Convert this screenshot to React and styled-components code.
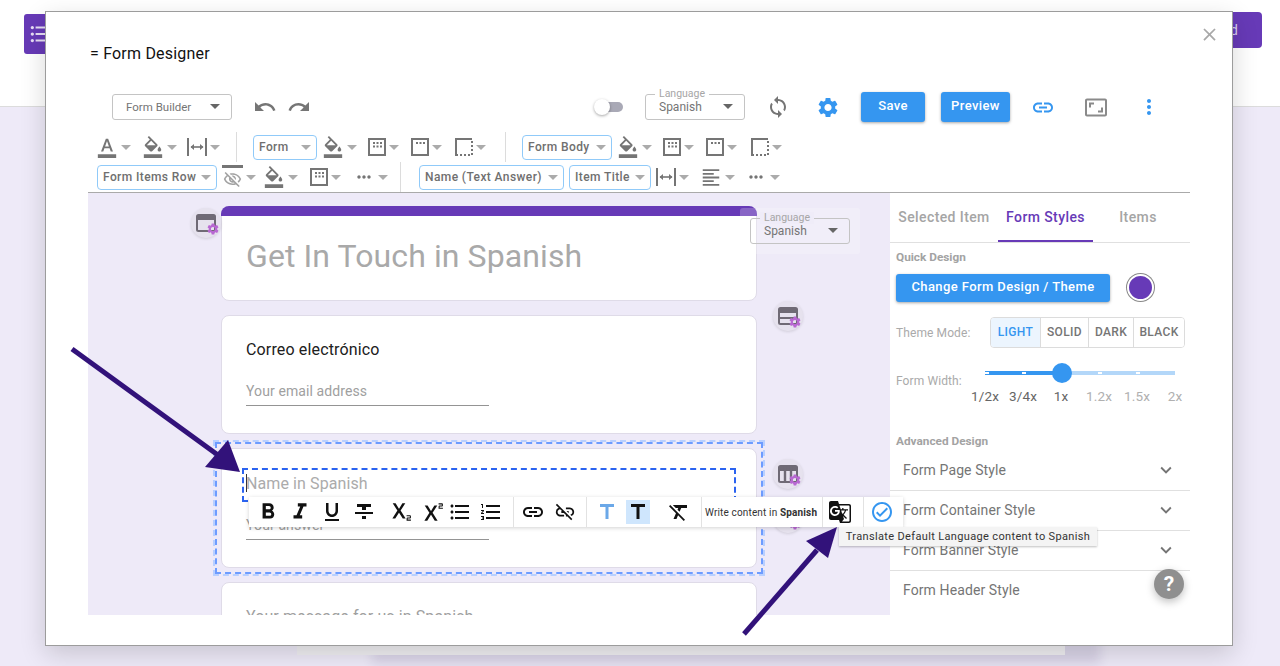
import React from "react"
import styled, { createGlobalStyle } from "styled-components"
import {
    MdFormatColorText,
    MdFormatColorFill,
    MdUndo,
    MdRedo,
    MdSync,
    MdSettings,
    MdLink,
    MdLinkOff,
    MdAspectRatio,
    MdMoreVert,
    MdMoreHoriz,
    MdFormatAlignLeft,
    MdOutlineVisibilityOff,
    MdFormatBold,
    MdFormatItalic,
    MdFormatUnderlined,
    MdFormatStrikethrough,
    MdSubscript,
    MdSuperscript,
    MdFormatListBulleted,
    MdFormatListNumbered,
    MdTitle,
    MdFormatClear,
    MdGTranslate,
    MdOutlineCheckCircle,
    MdExpandMore,
    MdClose,
} from "react-icons/md"

const GlobalStyle = createGlobalStyle`
    html, body {
        margin: 0;
        height: 100%;
        overflow: hidden;
        background: #eeeaf8;
        font-family: Roboto, "Liberation Sans", sans-serif;
    }
`

const Page = styled.div`
    position: relative;
    width: 1280px;
    height: 666px;
    overflow: hidden;
`

const PageHeader = styled.header`
    display: flex;
    justify-content: space-between;
    align-items: flex-start;
    height: 107px;
    padding: 12px 18px 0 24px;
    box-sizing: border-box;
    background: #fff;
    border-bottom: 1px solid #dcdcdc;
`

const Logo = styled.div`
    display: flex;
    align-items: center;
    width: 40px;
    height: 40px;
    margin-top: 2px;
    padding-left: 4px;
    box-sizing: border-box;
    border-radius: 3px;
    background: #673ab7;
    color: #e8dff5;
    font-size: 26px;
`

const SendButton = styled.div`
    width: 90px;
    height: 36px;
    padding-right: 24px;
    box-sizing: border-box;
    border-radius: 4px;
    background: #673ab7;
    color: #d9cdf0;
    font-size: 14px;
    line-height: 36px;
    text-align: right;
`

const PageSheet = styled.div`
    width: 768px;
    height: 548px;
    margin-left: 297px;
    background: #f1f0f3;
    box-shadow: 55px 30px 10px -20px rgba(60, 40, 110, 0.1);
`

const Modal = styled.div`
    position: absolute;
    left: 45px;
    top: 11px;
    width: 1188px;
    height: 635px;
    box-sizing: border-box;
    padding: 0 42px;
    background: #fff;
    border: 1px solid #9c9c9c;
    box-shadow: 0 8px 24px rgba(0, 0, 0, 0.16);
`

const CloseButton = styled.div`
    position: absolute;
    right: 12px;
    top: 12px;
    color: #a8a8a8;
    font-size: 21px;
    line-height: 0;
`

const TitleBar = styled.div`
    height: 30px;
    margin-top: 27px;
    padding-left: 2px;
    color: #111;
    font-size: 16px;
    letter-spacing: 0.2px;
    line-height: 30px;
`

const TopBar = styled.div`
    display: flex;
    align-items: center;
    height: 30px;
    margin-top: 23px;
    padding-left: 24px;
`

const OutlineSelect = styled.div`
    position: relative;
    display: flex;
    align-items: center;
    justify-content: space-between;
    box-sizing: border-box;
    width: ${(p) => p.$width}px;
    height: 26px;
    margin-left: ${(p) => p.$ml || 0}px;
    padding: 0 11px 1px 13px;
    border: 1px solid #c4c4c4;
    border-radius: 3px;
    color: #757575;
    font-size: ${(p) => p.$font || 11.5}px;
`

const FieldLegend = styled.span`
    position: absolute;
    left: 9px;
    top: -7px;
    padding: 0 4px;
    background: ${(p) => p.$bg || "#fff"};
    color: #a6a6a6;
    font-size: 10.5px;
    line-height: 12px;
`

const CaretDown = styled.span`
    flex: none;
    width: 0;
    height: 0;
    border-left: 5px solid transparent;
    border-right: 5px solid transparent;
    border-top: 5px solid ${(p) => p.$color || "#666"};
`

const IconSlot = styled.div`
    display: flex;
    align-items: center;
    justify-content: center;
    flex: none;
    margin-left: ${(p) => p.$ml || 0}px;
    width: ${(p) => p.$w || 24}px;
    color: ${(p) => p.$color || "#757575"};
    font-size: ${(p) => p.$size || 24}px;
`

const Toggle = styled.div`
    position: relative;
    width: 28px;
    height: 10px;
    margin-left: ${(p) => p.$ml}px;
    border-radius: 5px;
    background: #a9a9b6;
`

const ToggleKnob = styled.span`
    position: absolute;
    left: -1px;
    top: -3px;
    width: 16px;
    height: 16px;
    border-radius: 50%;
    background: #fff;
    box-shadow: 0 1px 3px rgba(0, 0, 0, 0.35);
`

const PrimaryButton = styled.div`
    box-sizing: border-box;
    flex: none;
    width: ${(p) => p.$width}px;
    height: ${(p) => p.$height || 30}px;
    margin-left: ${(p) => p.$ml || 0}px;
    border-radius: 3px;
    background: #3596f0;
    box-shadow: 0 1px 3px rgba(0, 0, 0, 0.35);
    color: #fff;
    font-size: 13px;
    font-weight: 500;
    letter-spacing: 0.4px;
    line-height: ${(p) => (p.$height || 30) - 2}px;
    text-align: center;
`

const StyleRow = styled.div`
    display: flex;
    align-items: center;
    height: 30px;
    margin-top: ${(p) => p.$mt || 0}px;
    padding-left: ${(p) => p.$pl}px;
`

const ToolGroup = styled.div`
    display: flex;
    align-items: center;
    gap: 3px;
    flex: none;
    margin-left: ${(p) => p.$ml || 0}px;
`

const RowDivider = styled.div`
    flex: none;
    width: 1px;
    height: 30px;
    margin-left: ${(p) => p.$ml}px;
    background: #dcdcdc;
`

const StyleSelect = styled.div`
    display: flex;
    align-items: center;
    justify-content: space-between;
    flex: none;
    box-sizing: border-box;
    width: ${(p) => p.$width}px;
    height: 25px;
    margin-left: ${(p) => p.$ml || 0}px;
    padding: 0 5px;
    border: 1px solid #90caf9;
    border-radius: 4px;
    color: #6f6f6f;
    font-size: 12px;
    font-weight: 500;
    letter-spacing: 0.4px;
    white-space: nowrap;
`

const EyeStack = styled.div`
    display: flex;
    flex-direction: column;
    align-items: center;
    width: 21px;
    color: #a2a2a2;
    font-size: 19px;
    line-height: 0;
`

const EyeBar = styled.span`
    width: 21px;
    height: 3px;
    margin-bottom: 2px;
    background: #757575;
`

const Body = styled.div`
    display: flex;
    height: 422px;
    overflow: hidden;
    border-top: 1px solid #aaa;
`

const Canvas = styled.div`
    position: relative;
    z-index: 2;
    flex: none;
    width: 802px;
    box-sizing: border-box;
    padding-top: 13px;
    background: #eeeaf8;
`

const Card = styled.div`
    position: relative;
    box-sizing: border-box;
    width: 536px;
    height: ${(p) => p.$height}px;
    margin: 0 auto 14px;
    padding: ${(p) => p.$pad || "0 24px"};
    border: 1px solid #dfdbe8;
    border-radius: 8px;
    background: #fff;
`

const CardBanner = styled.div`
    height: 10px;
    margin: -1px -25px 0;
    border-radius: 8px 8px 0 0;
    background: #673ab7;
`

const CardTitle = styled.div`
    margin-top: 21px;
    color: #a9a9a9;
    font-size: 32px;
    line-height: 38px;
    letter-spacing: 0.1px;
`

const Question = styled.div`
    color: #202020;
    font-size: 16px;
    letter-spacing: 0.15px;
    line-height: 18px;
`

const AnswerLine = styled.div`
    width: 243px;
    height: 22px;
    margin-top: ${(p) => p.$mt || 0}px;
    border-bottom: 1px solid #949494;
    color: #a0a0a0;
    font-size: ${(p) => p.$font || 14}px;
    letter-spacing: 0.1px;
    line-height: 17px;
    white-space: nowrap;
`

const SelectionFrame = styled.div`
    position: absolute;
    inset: -7px;
    border: 2px dashed #6d9cff;
    outline: 2px dashed #b9d0ff;
    pointer-events: none;
`

const EditingBox = styled.div`
    position: absolute;
    left: 20px;
    top: 19px;
    width: 494px;
    height: 34px;
    box-sizing: border-box;
    padding: 4px 0 0 2px;
    border: 2px dashed #2b63f0;
    color: #ababab;
    font-size: 16px;
    letter-spacing: 0.1px;
    line-height: 19px;
`

const TextCaret = styled.span`
    display: inline-block;
    width: 1px;
    height: 18px;
    margin-right: -1px;
    background: #333;
    vertical-align: -3px;
`

const FloatingButton = styled.div`
    position: absolute;
    top: ${(p) => p.$top}px;
    ${(p) => (p.$left ? `left: ${p.$left}px;` : "right: -47px;")}
    display: flex;
    align-items: center;
    justify-content: center;
    width: 30px;
    height: 30px;
    border-radius: 50%;
    background: #e6e2ee;
    box-shadow: 0 1px 3px rgba(0, 0, 0, 0.12);
`

const GearBadge = styled.span`
    position: absolute;
    right: 1px;
    bottom: 2px;
    color: #b868d2;
    font-size: 14px;
    line-height: 0;
`

const LanguageOverlay = styled.div`
    position: absolute;
    left: 652px;
    top: 15px;
    width: 100px;
    padding: 10px;
    border-radius: 3px;
    background: rgba(255, 255, 255, 0.22);
`

const EditorToolbar = styled.div`
    position: absolute;
    left: 27px;
    top: 48px;
    z-index: 3;
    display: flex;
    align-items: center;
    height: 30px;
    padding-left: 3px;
    background: #fff;
    box-shadow: 0 1px 4px rgba(0, 0, 0, 0.18);
`

const ToolbarIcon = styled.div`
    display: flex;
    align-items: center;
    justify-content: center;
    flex: none;
    box-sizing: border-box;
    width: ${(p) => p.$w || 32}px;
    height: 24px;
    margin-left: ${(p) => p.$ml || 0}px;
    padding-right: ${(p) => p.$pr || 0}px;
    background: ${(p) => (p.$active ? "#cfe6fd" : "transparent")};
    color: ${(p) => p.$color || "#111"};
    font-size: ${(p) => p.$size || 24}px;
`

const ToolbarDivider = styled.div`
    flex: none;
    width: 1px;
    height: 30px;
    margin: 0 ${(p) => p.$mx || 0}px;
    background: #e2e2e2;
`

const WriteNote = styled.div`
    flex: none;
    color: #333;
    font-size: 10px;
    letter-spacing: 0.15px;
    white-space: nowrap;
`

const Tooltip = styled.div`
    position: absolute;
    left: 590px;
    top: 30px;
    box-sizing: border-box;
    width: 258px;
    height: 19px;
    background: #f4f4f4;
    box-shadow: 0 1px 2px rgba(0, 0, 0, 0.25);
    color: #333;
    font-size: 11px;
    letter-spacing: 0.35px;
    line-height: 20px;
    text-align: center;
    white-space: nowrap;
`

const SidePanel = styled.aside`
    flex: none;
    width: 300px;
    position: relative;
    z-index: 1;
`

const TabBar = styled.div`
    display: flex;
    height: 49px;
    border-bottom: 1px solid #e0e0e0;
`

const Tab = styled.div`
    box-sizing: border-box;
    width: ${(p) => p.$width}px;
    height: 49px;
    border-bottom: 2px solid ${(p) => (p.$active ? "#673ab7" : "transparent")};
    color: ${(p) => (p.$active ? "#673ab7" : "#a5a5a5")};
    font-size: 14px;
    font-weight: 500;
    letter-spacing: 0.4px;
    line-height: 48px;
    text-align: center;
    white-space: nowrap;
`

const SectionLabel = styled.div`
    margin: ${(p) => p.$m};
    color: #a3a3a3;
    font-size: 11.8px;
    font-weight: 700;
    line-height: 14px;
`

const ThemeRow = styled.div`
    display: flex;
    align-items: center;
    margin-top: ${(p) => p.$mt}px;
    padding-left: 6px;
`

const ThemeSwatch = styled.span`
    flex: none;
    box-sizing: border-box;
    width: 27px;
    height: 27px;
    margin: -2px 0 0 17px;
    border: 2px solid #fff;
    border-radius: 50%;
    background: #673ab7;
    box-shadow: 0 0 0 1px #888;
`

const FieldLabel = styled.span`
    flex: none;
    width: 94px;
    color: #aaa;
    font-size: 12px;
    letter-spacing: 0.1px;
`

const ModeGroup = styled.div`
    display: flex;
    height: 29px;
    border: 1px solid #dcdcdc;
    border-radius: 4px;
    overflow: hidden;
`

const ModeButton = styled.div`
    box-sizing: border-box;
    width: ${(p) => p.$width}px;
    border-left: ${(p) => (p.$first ? "none" : "1px solid #dcdcdc")};
    background: ${(p) => (p.$active ? "#ecf5fe" : "#fff")};
    color: ${(p) => (p.$active ? "#3596f0" : "#757575")};
    font-size: 12px;
    font-weight: 500;
    letter-spacing: 0.35px;
    line-height: 28px;
    text-align: center;
`

const WidthSection = styled.div`
    position: relative;
    height: 56px;
    margin-top: 13px;
`

const WidthLabel = styled(FieldLabel)`
    position: absolute;
    left: 6px;
    top: 13px;
`

const SliderTrack = styled.div`
    position: absolute;
    left: 95px;
    top: 10px;
    width: 190px;
    height: 4px;
    background: #b3d7f9;
`

const SliderFill = styled.div`
    width: ${(p) => p.$pct}%;
    height: 100%;
    background: #3596f0;
`

const SliderDot = styled.span`
    position: absolute;
    left: ${(p) => p.$left}px;
    top: 1px;
    width: 4px;
    height: 2px;
    background: #fff;
`

const SliderThumb = styled.span`
    position: absolute;
    left: 67px;
    top: -8px;
    width: 20px;
    height: 20px;
    border-radius: 50%;
    background: #3596f0;
`

const Marks = styled.div`
    position: absolute;
    left: 76px;
    top: 28px;
    display: grid;
    grid-template-columns: repeat(6, 38px);
`

const Mark = styled.span`
    color: ${(p) => (p.$on ? "#666" : "#b0b0b0")};
    font-size: 13.5px;
    letter-spacing: 0.2px;
    line-height: 15px;
    text-align: center;
    white-space: nowrap;
`

const AccordionRow = styled.div`
    display: flex;
    align-items: center;
    justify-content: space-between;
    box-sizing: border-box;
    height: 40px;
    padding: 0 13px 2px;
    border-bottom: ${(p) => (p.$last ? "none" : "1px solid #e0e0e0")};
    color: #757575;
    font-size: 14px;
    letter-spacing: 0.1px;
`

const HelpButton = styled.div`
    position: absolute;
    right: 48px;
    bottom: 46px;
    z-index: 1;
    width: 30px;
    height: 30px;
    border-radius: 50%;
    background: #8f8f8f;
    box-shadow: 0 3px 8px rgba(0, 0, 0, 0.25);
    color: #fff;
    font-size: 21px;
    font-weight: 700;
    line-height: 30px;
    text-align: center;
`

const ArrowLayer = styled.svg`
    position: absolute;
    left: 0;
    top: 0;
    z-index: 5;
    pointer-events: none;
`

const Frame = ({ kind }) => (
    <svg width="18" height="18" viewBox="0 0 18 18" fill="none">
        {kind === "corner" ? (
            <>
                <path d="M1 18V1h16" stroke="#757575" strokeWidth="2" />
                <path d="M17 3v15M1 17h16" stroke="#757575" strokeWidth="2" strokeDasharray="2 2" />
            </>
        ) : (
            <>
                <rect x="1" y="1" width="16" height="16" stroke="#757575" strokeWidth="2" />
                <path d="M5 5h9" stroke="#757575" strokeWidth="2" strokeDasharray="2 1.5" />
                {kind === "all" && (
                    <path d="M5 8.5h9" stroke="#757575" strokeWidth="2" strokeDasharray="2 1.5" />
                )}
            </>
        )}
    </svg>
)

const WidthIcon = () => (
    <svg width="20" height="20" viewBox="0 0 20 20" fill="none">
        <path d="M1 1v18M19 1v18" stroke="#757575" strokeWidth="2" />
        <path d="M4 10h12" stroke="#757575" strokeWidth="1.6" />
        <path d="M7 7l-3.5 3L7 13zM13 7l3.5 3L13 13z" fill="#757575" />
    </svg>
)

const WindowIcon = ({ kind }) => (
    <svg width="20" height="18" viewBox="0 0 20 18" fill="none">
        <rect x="1" y="1" width="18" height="16" rx="1.5" stroke="#6f6a75" strokeWidth="2" />
        <rect x="1" y="1" width="18" height="5" fill="#6f6a75" />
        {kind === "split" && <path d="M1 11h18" stroke="#6f6a75" strokeWidth="2" />}
        {kind === "columns" && <path d="M7 1v16M13 1v16" stroke="#6f6a75" strokeWidth="2.4" />}
    </svg>
)

const Tool = ({ children, ml }) => (
    <ToolGroup $ml={ml}>
        {children}
        <CaretDown $color="#ababab" />
    </ToolGroup>
)

const StyleDropdown = ({ label, width, ml }) => (
    <StyleSelect $width={width} $ml={ml}>
        {label}
        <CaretDown $color="#ababab" />
    </StyleSelect>
)

const Fill = () => (
    <IconSlot $w={22} $size={24}>
        <MdFormatColorFill />
    </IconSlot>
)

const FloatingGear = ({ kind, top, left }) => (
    <FloatingButton $top={top} $left={left}>
        <WindowIcon kind={kind} />
        <GearBadge>
            <MdSettings />
        </GearBadge>
    </FloatingButton>
)

const marks = [
    ["1/2x", true],
    ["3/4x", true],
    ["1x", true],
    ["1.2x", false],
    ["1.5x", false],
    ["2x", false],
]

const App = () => {
    return (
        <Page>
            <GlobalStyle />
            <PageHeader>
                <Logo>
                    <MdFormatListBulleted />
                </Logo>
                <SendButton>Send</SendButton>
            </PageHeader>
            <PageSheet />

            <Modal>
                <CloseButton>
                    <MdClose />
                </CloseButton>
                <TitleBar>= Form Designer</TitleBar>

                <TopBar>
                    <OutlineSelect $width={120}>
                        Form Builder
                        <CaretDown />
                    </OutlineSelect>
                    <IconSlot $ml={21} $size={26}>
                        <MdUndo />
                    </IconSlot>
                    <IconSlot $ml={10} $size={26}>
                        <MdRedo />
                    </IconSlot>
                    <Toggle $ml={284}>
                        <ToggleKnob />
                    </Toggle>
                    <OutlineSelect $width={100} $ml={22} $font={12}>
                        <FieldLegend>Language</FieldLegend>
                        Spanish
                        <CaretDown />
                    </OutlineSelect>
                    <IconSlot $ml={21} $size={26}>
                        <MdSync />
                    </IconSlot>
                    <IconSlot $ml={26} $color="#3596f0" $size={25}>
                        <MdSettings />
                    </IconSlot>
                    <PrimaryButton $width={64} $ml={21}>
                        Save
                    </PrimaryButton>
                    <PrimaryButton $width={69} $ml={16}>
                        Preview
                    </PrimaryButton>
                    <IconSlot $ml={21} $color="#3596f0" $size={25}>
                        <MdLink />
                    </IconSlot>
                    <IconSlot $ml={29} $color="#8a8a8a" $size={27}>
                        <MdAspectRatio />
                    </IconSlot>
                    <IconSlot $ml={29} $color="#3596f0" $size={24}>
                        <MdMoreVert />
                    </IconSlot>
                </TopBar>

                <StyleRow $mt={10} $pl={8}>
                    <Tool>
                        <IconSlot $w={22} $size={24}>
                            <MdFormatColorText />
                        </IconSlot>
                    </Tool>
                    <Tool ml={11}>
                        <Fill />
                    </Tool>
                    <Tool ml={10}>
                        <WidthIcon />
                    </Tool>
                    <RowDivider $ml={16} />
                    <StyleDropdown label="Form" width={64} ml={16} />
                    <Tool ml={5}>
                        <Fill />
                    </Tool>
                    <Tool ml={11}>
                        <Frame kind="all" />
                    </Tool>
                    <Tool ml={12}>
                        <Frame kind="top" />
                    </Tool>
                    <Tool ml={13}>
                        <Frame kind="corner" />
                    </Tool>
                    <RowDivider $ml={19} />
                    <StyleDropdown label="Form Body" width={90} ml={16} />
                    <Tool ml={5}>
                        <Fill />
                    </Tool>
                    <Tool ml={11}>
                        <Frame kind="all" />
                    </Tool>
                    <Tool ml={12}>
                        <Frame kind="top" />
                    </Tool>
                    <Tool ml={14}>
                        <Frame kind="corner" />
                    </Tool>
                </StyleRow>

                <StyleRow $pl={9}>
                    <StyleDropdown label="Form Items Row" width={120} />
                    <Tool ml={5}>
                        <EyeStack>
                            <EyeBar />
                            <MdOutlineVisibilityOff />
                        </EyeStack>
                    </Tool>
                    <Tool ml={7}>
                        <Fill />
                    </Tool>
                    <Tool ml={12}>
                        <Frame kind="all" />
                    </Tool>
                    <Tool ml={12}>
                        <IconSlot $w={22} $size={20}>
                            <MdMoreHoriz />
                        </IconSlot>
                    </Tool>
                    <RowDivider $ml={12} />
                    <StyleDropdown label="Name (Text Answer)" width={145} ml={18} />
                    <StyleDropdown label="Item Title" width={82} ml={5} />
                    <Tool ml={5}>
                        <WidthIcon />
                    </Tool>
                    <Tool ml={11}>
                        <IconSlot $w={22} $size={25}>
                            <MdFormatAlignLeft />
                        </IconSlot>
                    </Tool>
                    <Tool ml={10}>
                        <IconSlot $w={22} $size={20}>
                            <MdMoreHoriz />
                        </IconSlot>
                    </Tool>
                </StyleRow>

                <Body>
                    <Canvas>
                        <Card $height={95}>
                            <CardBanner />
                            <CardTitle>Get In Touch in Spanish</CardTitle>
                            <FloatingGear top={1} left={-31} />
                        </Card>
                        <Card $height={119} $pad="25px 24px 0">
                            <Question>Correo electrónico</Question>
                            <AnswerLine $mt={24}>Your email address</AnswerLine>
                            <FloatingGear kind="split" top={-15} />
                        </Card>
                        <Card $height={120} $pad="68px 24px 0">
                            <SelectionFrame />
                            <EditingBox>
                                <TextCaret />
                                Name in Spanish
                            </EditingBox>
                            <AnswerLine>Your answer</AnswerLine>
                            <FloatingGear kind="columns" top={10} />
                            <FloatingGear top={54} />
                            <EditorToolbar>
                                <ToolbarIcon>
                                    <MdFormatBold size={26} />
                                </ToolbarIcon>
                                <ToolbarIcon>
                                    <MdFormatItalic size={26} />
                                </ToolbarIcon>
                                <ToolbarIcon>
                                    <MdFormatUnderlined />
                                </ToolbarIcon>
                                <ToolbarIcon>
                                    <MdFormatStrikethrough />
                                </ToolbarIcon>
                                <ToolbarIcon $w={38}>
                                    <MdSubscript size={26} />
                                </ToolbarIcon>
                                <ToolbarIcon $w={26}>
                                    <MdSuperscript size={26} />
                                </ToolbarIcon>
                                <ToolbarIcon>
                                    <MdFormatListBulleted />
                                </ToolbarIcon>
                                <ToolbarIcon $w={30}>
                                    <MdFormatListNumbered />
                                </ToolbarIcon>
                                <ToolbarDivider $mx={7} />
                                <ToolbarIcon $w={24}>
                                    <MdLink />
                                </ToolbarIcon>
                                <ToolbarIcon $w={40} $size={22}>
                                    <MdLinkOff />
                                </ToolbarIcon>
                                <ToolbarDivider $mx={1} />
                                <ToolbarIcon $w={38} $color="#6ba8e8">
                                    <MdTitle />
                                </ToolbarIcon>
                                <ToolbarIcon $w={24} $active>
                                    <MdTitle />
                                </ToolbarIcon>
                                <ToolbarIcon $w={38} $ml={10}>
                                    <MdFormatClear />
                                </ToolbarIcon>
                                <ToolbarDivider $mx={3} />
                                <WriteNote>
                                    Write content in <b>Spanish</b>
                                </WriteNote>
                                <ToolbarDivider $mx={5} />
                                <ToolbarIcon $w={35} $pr={11}>
                                    <MdGTranslate />
                                </ToolbarIcon>
                                <ToolbarDivider />
                                <ToolbarIcon $w={39} $pr={3} $color="#3596f0">
                                    <MdOutlineCheckCircle />
                                </ToolbarIcon>
                                <Tooltip>Translate Default Language content to Spanish</Tooltip>
                            </EditorToolbar>
                        </Card>
                        <Card $height={120} $pad="25px 24px 0">
                            <AnswerLine $font={16}>Your message for us in Spanish</AnswerLine>
                        </Card>
                        <LanguageOverlay>
                            <OutlineSelect $width={100} $font={12}>
                                <FieldLegend $bg="#efecf8">Language</FieldLegend>
                                Spanish
                                <CaretDown />
                            </OutlineSelect>
                        </LanguageOverlay>
                    </Canvas>

                    <SidePanel>
                        <TabBar>
                            <Tab $width={108}>Selected Item</Tab>
                            <Tab $width={95} $active>
                                Form Styles
                            </Tab>
                            <Tab $width={90}>Items</Tab>
                        </TabBar>
                        <SectionLabel $m="7px 0 0 6px">Quick Design</SectionLabel>
                        <ThemeRow $mt={10}>
                            <PrimaryButton $width={214} $height={28}>
                                Change Form Design / Theme
                            </PrimaryButton>
                            <ThemeSwatch />
                        </ThemeRow>
                        <ThemeRow $mt={15}>
                            <FieldLabel>Theme Mode:</FieldLabel>
                            <ModeGroup>
                                <ModeButton $first $active $width={49}>
                                    LIGHT
                                </ModeButton>
                                <ModeButton $width={48}>SOLID</ModeButton>
                                <ModeButton $width={45}>DARK</ModeButton>
                                <ModeButton $width={51}>BLACK</ModeButton>
                            </ModeGroup>
                        </ThemeRow>
                        <WidthSection>
                            <WidthLabel>Form Width:</WidthLabel>
                            <SliderTrack>
                                <SliderFill $pct={40} />
                                <SliderDot $left={0} />
                                <SliderDot $left={37} />
                                <SliderDot $left={113} />
                                <SliderDot $left={151} />
                                <SliderThumb />
                            </SliderTrack>
                            <Marks>
                                {marks.map(([label, on]) => (
                                    <Mark key={label} $on={on}>
                                        {label}
                                    </Mark>
                                ))}
                            </Marks>
                        </WidthSection>
                        <SectionLabel $m="17px 0 3px 6px">Advanced Design</SectionLabel>
                        <AccordionRow>
                            Form Page Style
                            <MdExpandMore size={22} />
                        </AccordionRow>
                        <AccordionRow>
                            Form Container Style
                            <MdExpandMore size={22} />
                        </AccordionRow>
                        <AccordionRow>
                            Form Banner Style
                            <MdExpandMore size={22} />
                        </AccordionRow>
                        <AccordionRow $last>Form Header Style</AccordionRow>
                    </SidePanel>
                </Body>
                <HelpButton>?</HelpButton>
            </Modal>

            <ArrowLayer width="1280" height="666" viewBox="0 0 1280 666">
                <path d="M72 349L222 458" stroke="#32127a" strokeWidth="5" />
                <polygon points="240,472 205,467 228,440" fill="#32127a" />
                <path d="M744 634L817 550" stroke="#32127a" strokeWidth="5" />
                <polygon points="837,527 806,541 828,558" fill="#32127a" />
            </ArrowLayer>
        </Page>
    )
}

export default App
